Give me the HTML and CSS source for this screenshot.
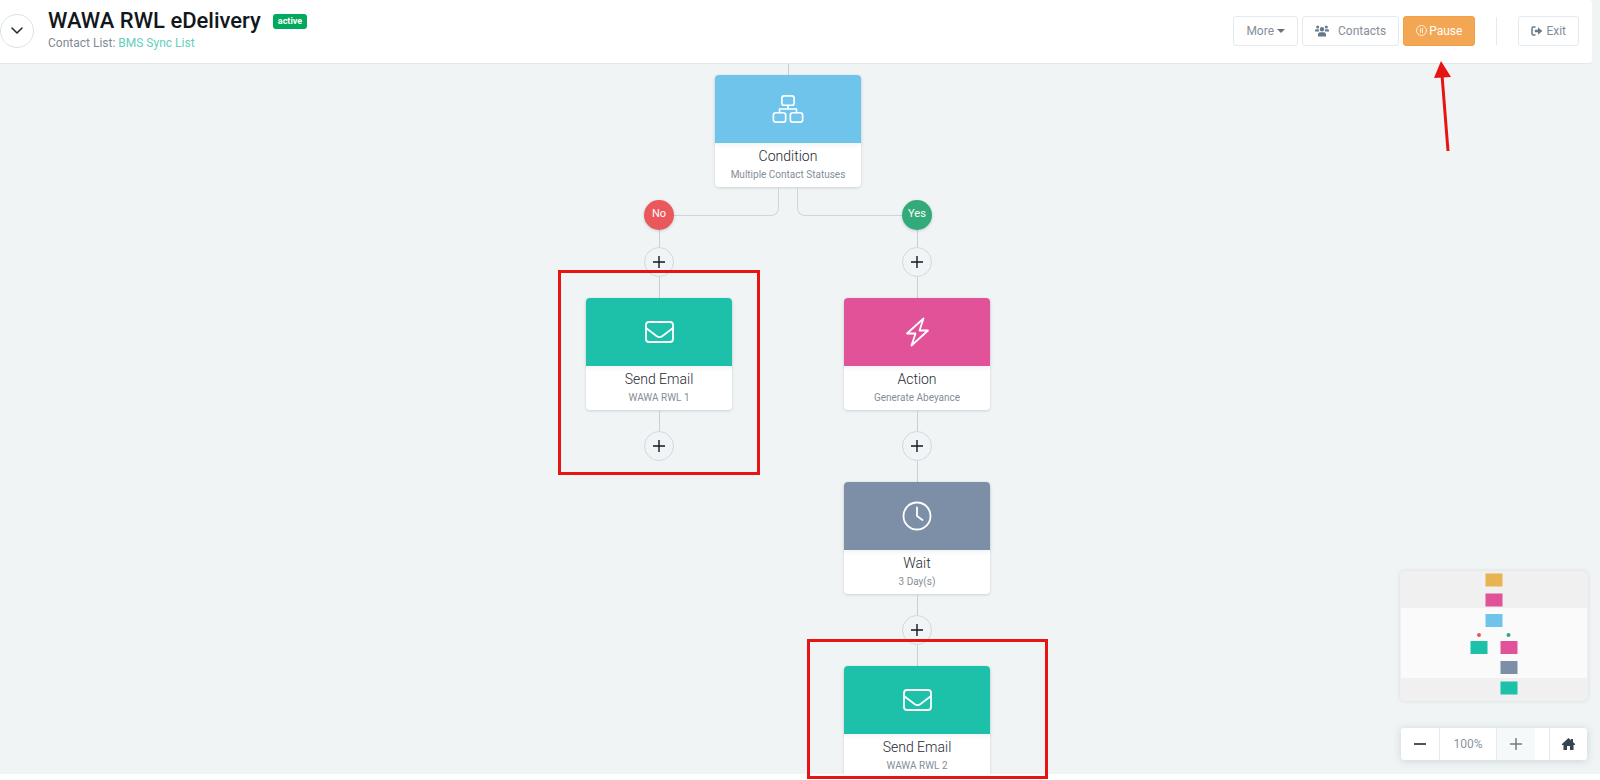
FILE: index.html
```html
<!DOCTYPE html>
<html lang="en">
    <head>
        <title>WAWA RWL eDelivery</title>
        <meta charset="UTF-8">
        <link rel="stylesheet" href="styles.css">
    </head>
    <body>
        <svg class="symbols" aria-hidden="true">
            <symbol id="mail" viewBox="0 0 32 32">
                <rect x="3" y="6" width="27" height="20" rx="3"/>
                <path d="M3 12l10.500 8q3 2.200 6 0L30 12"/>
            </symbol>
            <symbol id="plus" viewBox="0 0 12 12">
                <path d="M6 0v12M0 6h12"/>
            </symbol>
        </svg>

        <header class="header">
            <button class="toggle" aria-label="Collapse">
                <svg width="12" height="8" viewBox="0 0 12 8"><path d="M1 1l5 5 5-5"/></svg>
            </button>
            <div class="heading">
                <div class="title_row">
                    <h1>WAWA RWL eDelivery</h1>
                    <span class="badge">active</span>
                </div>
                <p>Contact List: <a href="#">BMS Sync List</a></p>
            </div>
            <div class="actions">
                <button class="btn">More <span class="caret"></span></button>
                <button class="btn">
                    <svg class="users" width="14" height="12" viewBox="0 0 14 12">
                        <circle cx="2.700" cy="2" r="1.500"/>
                        <circle cx="11.300" cy="2" r="1.500"/>
                        <circle cx="7" cy="4.200" r="2.200"/>
                        <path d="M0 6.500V5.600Q0 4.200 1.400 4.200H3.600L4.200 6.500zM14 6.500V5.600Q14 4.200 12.600 4.200H10.400L9.800 6.500zM3 11.500V9.600Q3 7.200 5.200 7.200H8.800Q11 7.200 11 9.600V11.500z"/>
                    </svg>
                    Contacts
                </button>
                <button class="btn pause">
                    <svg width="11" height="11" viewBox="0 0 11 11"><circle cx="5.500" cy="5.500" r="5"/><path d="M4.500 3.500v4M6.500 3.500v4"/></svg>
                    Pause
                </button>
                <span class="divider"></span>
                <button class="btn">
                    <svg class="exit" width="12" height="10" viewBox="0 0 12 10"><path d="M4 1H2.500Q1 1 1 2.500V7.500Q1 9 2.500 9H4"/><path class="solid" d="M3.800 3.800H7V1.200L11.300 5 7 8.800V6.200H3.800z"/></svg>
                    Exit
                </button>
            </div>
        </header>

        <main class="canvas">
            <div class="flow">
                <span class="line short"></span>
                <div class="node">
                    <div class="node_icon condition">
                        <svg width="34" height="32" viewBox="0 0 34 32">
                            <rect x="10.500" y="2" width="13" height="10" rx="2.500"/>
                            <rect x="1.500" y="20" width="13" height="10" rx="2.500"/>
                            <rect x="19.500" y="20" width="13" height="10" rx="2.500"/>
                            <path d="M17 12v4M8 20v-4h18v4"/>
                        </svg>
                    </div>
                    <h2>Condition</h2>
                    <p>Multiple Contact Statuses</p>
                </div>
                <div class="branches">
                    <div class="branch no">
                        <span class="answer">No</span>
                        <span class="line"></span>
                        <button class="add" aria-label="Add step"><svg><use href="#plus"/></svg></button>
                        <span class="line long"></span>
                        <div class="node">
                            <div class="node_icon email"><svg><use href="#mail"/></svg></div>
                            <h2>Send Email</h2>
                            <p>WAWA RWL 1</p>
                        </div>
                        <span class="line long"></span>
                        <button class="add" aria-label="Add step"><svg><use href="#plus"/></svg></button>
                    </div>
                    <div class="branch yes">
                        <span class="answer">Yes</span>
                        <span class="line"></span>
                        <button class="add" aria-label="Add step"><svg><use href="#plus"/></svg></button>
                        <span class="line long"></span>
                        <div class="node">
                            <div class="node_icon action">
                                <svg viewBox="0 0 32 32"><path d="M22.500 2.500L6 17.500h8.500L10.500 29.500 27 14.500h-8.500z"/></svg>
                            </div>
                            <h2>Action</h2>
                            <p>Generate Abeyance</p>
                        </div>
                        <span class="line long"></span>
                        <button class="add" aria-label="Add step"><svg><use href="#plus"/></svg></button>
                        <span class="line long"></span>
                        <div class="node">
                            <div class="node_icon wait">
                                <svg viewBox="0 0 32 32"><circle cx="16" cy="16" r="13.500"/><path d="M16 7.500V16l5.500 4"/></svg>
                            </div>
                            <h2>Wait</h2>
                            <p>3 Day(s)</p>
                        </div>
                        <span class="line long"></span>
                        <button class="add" aria-label="Add step"><svg><use href="#plus"/></svg></button>
                        <span class="line long"></span>
                        <div class="node">
                            <div class="node_icon email"><svg><use href="#mail"/></svg></div>
                            <h2>Send Email</h2>
                            <p>WAWA RWL 2</p>
                        </div>
                    </div>
                </div>
            </div>
        </main>

        <aside class="tools">
            <svg class="minimap" viewBox="0 0 188 130">
                <rect class="view" x="1" y="37" width="186" height="70"/>
                <rect x="85.500" y="2.500" width="17" height="13" fill="#e6b450"/>
                <rect x="85.500" y="22.500" width="17" height="13" fill="#e25299"/>
                <rect x="85.500" y="43" width="17" height="13" fill="#6ec4eb"/>
                <circle cx="79" cy="64" r="2" fill="#ea5455"/>
                <circle cx="108.500" cy="64" r="2" fill="#33ab78"/>
                <rect x="70.500" y="70" width="17" height="13" fill="#1dc0a9"/>
                <rect x="100.500" y="70" width="17" height="13" fill="#e25299"/>
                <rect x="100.500" y="90" width="17" height="13" fill="#7d8fa6"/>
                <rect x="100.500" y="110.500" width="17" height="13" fill="#1dc0a9"/>
            </svg>
            <div class="zoom">
                <button aria-label="Zoom out"><svg width="12" height="12" viewBox="0 0 12 12"><path d="M0 6h12"/></svg></button>
                <span class="level">100%</span>
                <button class="zoom_in" aria-label="Zoom in"><svg width="12" height="12"><use href="#plus"/></svg></button>
                <button class="home" aria-label="Home">
                    <svg width="13" height="12" viewBox="0 0 13 12"><path d="M6.500 0L9 2.200V1h2v3L13 6v1h-1.500v5H8V8H5v4H1.500V7H0V6z"/></svg>
                </button>
            </div>
        </aside>

        <div class="mark first"></div>
        <div class="mark second"></div>
        <svg class="arrow" width="18" height="91" viewBox="0 0 18 91">
            <path class="shaft" d="M8 14L14 90"/>
            <path d="M7 0L17 16 0 17z"/>
        </svg>
    </body>
</html>
```
FILE: styles.css
```css
* {
    box-sizing: border-box;
}
body {
    display: flex;
    flex-direction: column;
    position: relative;
    height: 100vh;
    margin: 0;
    overflow: hidden;
    font-family: Roboto, "Liberation Sans", sans-serif;
    background: linear-gradient(#f0f4f5, #f0f4f5) no-repeat 0 0 / 100% calc(100% - 6px) #fff;
}
h1, h2, p {
    margin: 0;
}
button {
    padding: 0;
    font-family: inherit;
    cursor: pointer;
}
svg {
    fill: none;
    stroke-linecap: round;
    stroke-linejoin: round;
}
.symbols {
    position: absolute;
    width: 0;
    height: 0;
}

/* header */
.header {
    display: flex;
    align-items: center;
    position: relative;
    z-index: 2;
    height: 63px;
    margin-right: 8px;
    padding: 0 13px 2px 0;
    background-color: #fff;
    border-radius: 0 3px 3px 0;
    box-shadow: 0 1px 1px #e1e6e9;
}
.toggle {
    display: flex;
    align-items: center;
    justify-content: center;
    width: 34px;
    height: 34px;
    margin-right: 14px;
    background-color: #fff;
    border: 1px solid #dbe3ea;
    border-radius: 50%;
}
.toggle svg {
    stroke: #1c2a33;
    stroke-width: 1.5;
}
.heading {
    padding-bottom: 1px;
}
.title_row {
    display: flex;
    align-items: center;
    gap: 12px;
}
h1 {
    font-size: 22px;
    line-height: 26px;
    font-weight: 500;
    color: #12171b;
}
.badge {
    padding: 0 5px;
    font-size: 9px;
    line-height: 15px;
    font-weight: 700;
    color: #fff;
    background-color: #00a95c;
    border-radius: 3px;
}
.heading p {
    font-size: 12px;
    line-height: 18px;
    color: #7f8a94;
}
.heading a {
    color: #5fd0b9;
    text-decoration: none;
}
.actions {
    display: flex;
    align-items: center;
    gap: 4px;
    margin-left: auto;
}
.btn {
    display: flex;
    align-items: center;
    gap: 3px;
    height: 30px;
    padding: 0 12px;
    font-size: 12px;
    font-weight: 400;
    color: #858e98;
    background-color: #fff;
    border: 1px solid #e4eaed;
    border-radius: 3px;
}
.caret {
    border: 4px solid transparent;
    border-top-color: #66727d;
    border-bottom: 0;
}
.users {
    margin-right: 6px;
    fill: #66788a;
}
.pause {
    gap: 2px;
    color: #fff;
    background-color: #f3a653;
    border-color: #f2a043;
}
.pause svg {
    stroke: #fff;
    stroke-width: 0.8;
}
.exit {
    stroke: #66788a;
    stroke-width: 1.5;
}
.exit .solid {
    fill: #66788a;
    stroke: none;
}
.divider {
    width: 1px;
    height: 28px;
    margin: 0 17px;
    background-color: #e4eaed;
}

/* workflow */
.canvas {
    flex: 1;
    min-height: 0;
    margin-bottom: 6px;
    padding-right: 24px;
    overflow: hidden;
}
.flow, .branch {
    display: flex;
    flex-direction: column;
    align-items: center;
}
.line {
    width: 1px;
    height: 17px;
    background-color: #c9cfd4;
}
.line.short {
    height: 12px;
}
.line.long {
    height: 21px;
}
.node {
    width: 146px;
    height: 112px;
    text-align: center;
    background-color: #fff;
    border-radius: 4px;
    box-shadow: 0 1px 3px rgba(60, 80, 95, 0.2);
}
.node_icon {
    display: flex;
    align-items: center;
    justify-content: center;
    height: 68px;
    border-radius: 4px 4px 0 0;
    box-shadow: 0 2px 4px rgba(60, 80, 95, 0.08);
}
.node_icon svg {
    width: 32px;
    height: 32px;
    stroke: #fff;
    stroke-width: 1.8;
}
.condition {
    background-color: #6ec4eb;
}
.email {
    background-color: #1dc0a9;
}
.action {
    background-color: #e25299;
}
.wait {
    background-color: #7d8fa6;
}
h2 {
    padding-top: 2px;
    font-size: 14px;
    line-height: 22px;
    font-weight: 300;
    color: #1f2931;
}
.node p {
    font-size: 10px;
    line-height: 16px;
    font-weight: 400;
    color: #858e97;
}
.branches {
    display: grid;
    grid-template-columns: 258px 258px;
}
.branch {
    position: relative;
    padding-top: 13px;
}
/* elbow from the condition to each answer */
.branch::before {
    content: "";
    position: absolute;
    top: 0;
    width: 120px;
    height: 28px;
    border: 0 solid #cfd5da;
    border-bottom-width: 1px;
}
.no::before {
    right: 9px;
    border-right-width: 1px;
    border-bottom-right-radius: 8px;
}
.yes::before {
    left: 9px;
    border-left-width: 1px;
    border-bottom-left-radius: 8px;
}
.answer {
    position: relative;
    width: 30px;
    height: 30px;
    font-size: 11px;
    line-height: 28px;
    text-align: center;
    color: #fff;
    border-radius: 50%;
    box-shadow: 0 1px 3px rgba(60, 80, 95, 0.25);
}
.no .answer {
    background-color: #ea585b;
}
.yes .answer {
    background-color: #33ab78;
}
.add {
    display: flex;
    align-items: center;
    justify-content: center;
    width: 30px;
    height: 30px;
    background-color: #f1f4f6;
    border: 1px solid #d2d8dd;
    border-radius: 50%;
}
.add svg {
    width: 12px;
    height: 12px;
    stroke: #15191c;
    stroke-width: 1.4;
}

/* minimap and zoom */
.tools {
    position: absolute;
    right: 12px;
    bottom: 20px;
    width: 188px;
}
.minimap {
    display: block;
    width: 100%;
    margin-bottom: 27px;
    background-color: #f0f0f0;
    border-radius: 5px;
    box-shadow: 0 0 4px rgba(60, 80, 95, 0.14);
}
.view {
    fill: #fafafa;
}
.zoom {
    display: flex;
    height: 32px;
    margin: 0 1px;
    background-color: #fff;
    border-radius: 3px;
    box-shadow: 0 1px 8px rgba(60, 80, 95, 0.2);
}
.zoom button {
    display: flex;
    align-items: center;
    justify-content: center;
    width: 38px;
    background-color: transparent;
    border: 0;
    stroke: #15191c;
    stroke-width: 1.5;
}
.level {
    flex: 1;
    font-size: 12px;
    line-height: 32px;
    text-align: center;
    color: #8b959e;
    border-left: 1px solid #e4eaed;
    border-right: 1px solid #e4eaed;
}
.zoom .zoom_in {
    background-color: #f6f9fa;
    stroke: #737d85;
}
.zoom .home {
    margin-left: 14px;
    border-left: 1px solid #e4eaed;
    stroke: none;
}
.home svg {
    fill: #35444f;
}

/* annotations */
.mark {
    position: absolute;
    z-index: 3;
    border: 3px solid #e81414;
}
.first {
    top: 270px;
    left: calc(50% - 242px);
    width: 202px;
    height: 205px;
}
.second {
    top: 639px;
    left: calc(50% + 7px);
    width: 241px;
    height: 140px;
}
.arrow {
    position: absolute;
    z-index: 3;
    top: 61px;
    right: 148px;
    fill: #e81414;
}
.shaft {
    stroke: #e81414;
    stroke-width: 3;
    stroke-linecap: butt;
}
```
